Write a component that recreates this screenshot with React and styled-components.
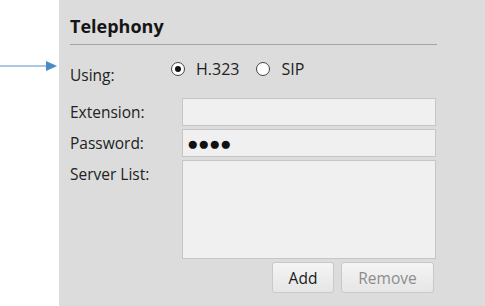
import React from "react";
import styled, { createGlobalStyle } from "styled-components";

const GlobalStyle = createGlobalStyle`
  body {
    margin: 0;
    background: #ffffff;
    font-family: "Open Sans", "Noto Sans", sans-serif;
  }
`;

const Page = styled.div`
  display: flex;
  width: 485px;
  height: 306px;
  overflow: hidden;
`;

const ArrowCol = styled.div`
  width: 59px;
  flex: none;
  padding-top: 55px;
`;

const Panel = styled.div`
  flex: 1;
  background: #dcdcdc;
  padding: 0 0 0 11px;
`;

const Section = styled.div`
  width: 367px;
`;

const Title = styled.div`
  height: 45px;
  box-sizing: border-box;
  padding-top: 14px;
  font-family: "Open Sans", sans-serif;
  font-weight: 700;
  font-size: 18px;
  line-height: 24px;
  color: #151515;
  border-bottom: 1px solid #a3a3a3;
`;

const Form = styled.div`
  display: grid;
  grid-template-columns: 112px 254px;
  row-gap: 3px;
  padding-top: 13px;
`;

const Label = styled.div`
  font-size: 15.5px;
  color: #222;
  line-height: 28px;
  padding-top: ${p => p.$top || 0}px;
  white-space: nowrap;
`;

const Radios = styled.div`
  display: flex;
  align-items: center;
  gap: 17px;
  height: 22px;
  margin-left: -11px;
  margin-bottom: 15px;
`;

const RadioItem = styled.label`
  display: flex;
  align-items: center;
  gap: 11px;
  font-size: 16px;
  color: #222;
`;

const Circle = styled.span`
  width: 14px;
  height: 14px;
  box-sizing: border-box;
  border-radius: 50%;
  border: 1px solid #444;
  background: #fff;
  display: flex;
  align-items: center;
  justify-content: center;
  &::after {
    content: "";
    width: 6px;
    height: 6px;
    border-radius: 50%;
    background: ${p => (p.$on ? "#111" : "transparent")};
  }
`;

const Field = styled.div`
  height: ${p => p.$h || 28}px;
  box-sizing: border-box;
  background: #f0f0f0;
  border: 1px solid #c6c6c6;
  display: flex;
  align-items: center;
  padding-left: 4px;
  font-size: 19px;
  letter-spacing: -0.5px;
  color: #111;
`;

const Buttons = styled.div`
  grid-column: 2;
  display: flex;
  justify-content: flex-end;
  gap: 7px;
  padding-right: 2px;
`;

const Button = styled.div`
  width: ${p => p.$w}px;
  height: 31px;
  box-sizing: border-box;
  border: 1px solid #c9c9c9;
  border-radius: 3px;
  background: linear-gradient(#f4f4f4, #e6e6e6);
  display: flex;
  align-items: center;
  justify-content: center;
  font-size: 15.5px;
  color: ${p => (p.$disabled ? "#8c8c8c" : "#1a1a1a")};
`;

const Bottom = styled.div`
  margin-top: 13px;
  border-top: 1px solid #a3a3a3;
`;

const Arrow = () => (
  <svg width="59" height="12" viewBox="0 0 59 12">
    <line x1="0" y1="6" x2="48" y2="6" stroke="#5a8fc4" strokeWidth="1.2" />
    <polygon points="46,1 57,6 46,11" fill="#4a8ac8" />
  </svg>
);

export default function App() {
  return (
    <Page>
      <GlobalStyle />
      <ArrowCol>
        <Arrow />
      </ArrowCol>
      <Panel>
        <Section>
          <Title>Telephony</Title>
          <Form>
            <Label $top={3}>Using:</Label>
            <Radios>
              <RadioItem>
                <Circle $on />
                H.323
              </RadioItem>
              <RadioItem>
                <Circle />
                SIP
              </RadioItem>
            </Radios>
            <Label>Extension:</Label>
            <Field />
            <Label>Password:</Label>
            <Field>●●●●</Field>
            <Label>Server List:</Label>
            <Field $h={99} />
            <Buttons>
              <Button $w={62}>Add</Button>
              <Button $w={93} $disabled>Remove</Button>
            </Buttons>
          </Form>
          <Bottom />
        </Section>
      </Panel>
    </Page>
  );
}
